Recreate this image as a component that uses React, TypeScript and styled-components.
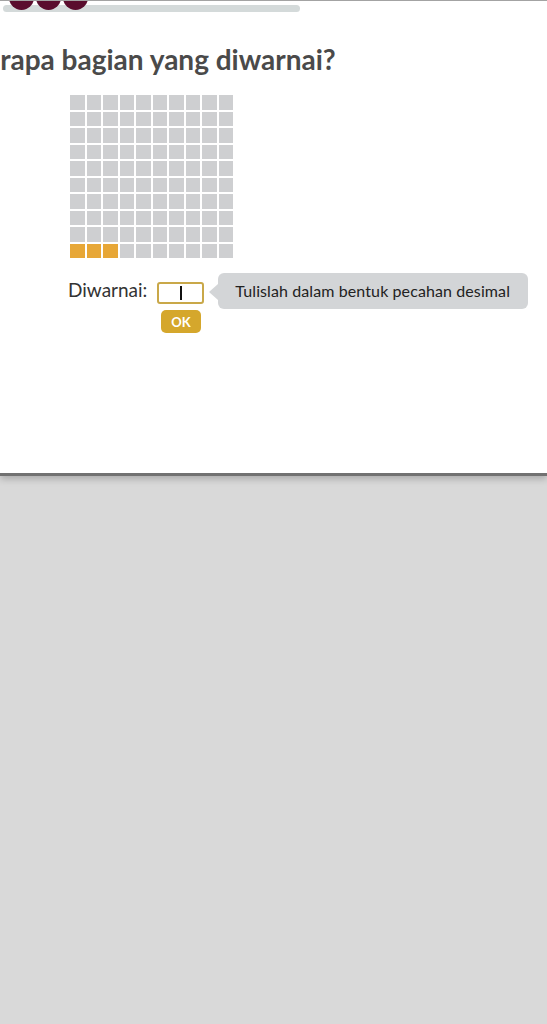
import styled, { createGlobalStyle } from "styled-components";

const GlobalStyle = createGlobalStyle`
  html, body {
    margin: 0;
    padding: 0;
    background: #d9d9d9;
  }
  body {
    font-family: Lato, "Noto Sans", sans-serif;
  }
`;

const Screen = styled.div`
  min-height: 1024px;
  background: #d9d9d9;
  overflow: hidden;
`;

const Sheet = styled.section`
  position: relative;
  height: 476px;
  box-sizing: border-box;
  background: #fff;
  border-top: 1px solid #a3a3a3;
  border-bottom: 3px solid #717171;
  box-shadow: 0 3px 7px rgba(0, 0, 0, 0.22);
  overflow: hidden;
`;

const Header = styled.header`
  position: relative;
  padding-top: 4px;
`;

const Progress = styled.div`
  margin-left: 3px;
  width: 297px;
  height: 7px;
  border-radius: 4px;
  background: #d4dada;
`;

const Dots = styled.div`
  position: absolute;
  top: -16px;
  left: 9px;
  display: flex;
  gap: 2px;
`;

const Dot = styled.span`
  width: 25px;
  height: 25px;
  border-radius: 50%;
  background: #5a0d2e;
`;

const Title = styled.h1`
  margin: 30px 0 0 -33px;
  font-size: 28px;
  line-height: 34px;
  font-weight: 700;
  color: #4a4a4a;
  white-space: nowrap;
`;

const Grid = styled.div`
  margin: 19px 0 0 70px;
  display: grid;
  grid-template-columns: repeat(10, 14.5px);
  grid-auto-rows: 14.5px;
  gap: 2px;
`;

const Cell = styled.span<{ $on: boolean }>`
  background: ${(p) => (p.$on ? "#e7a737" : "#cecfd1")};
`;

const AnswerRow = styled.div`
  margin: 15px 0 0 68px;
  display: flex;
  align-items: flex-start;
`;

const Label = styled.span`
  margin-top: 6px;
  font-size: 19px;
  line-height: 22px;
  color: #333;
`;

const InputStack = styled.div`
  margin-left: 10px;
  display: flex;
  flex-direction: column;
  align-items: center;
`;

const Field = styled.div`
  margin-top: 9px;
  width: 47px;
  height: 22px;
  box-sizing: border-box;
  border: 2px solid #c9a849;
  border-radius: 3px;
  display: flex;
  align-items: center;
  justify-content: center;
`;

const Caret = styled.span`
  width: 2px;
  height: 14px;
  background: #111;
`;

const OkButton = styled.button`
  margin-top: 6px;
  width: 40px;
  height: 23px;
  padding: 0;
  border: none;
  border-radius: 5px;
  background: #d5a72c;
  color: #fff;
  font-family: Lato, "Noto Sans", sans-serif;
  font-size: 13px;
  font-weight: 700;
`;

const Hint = styled.div`
  position: relative;
  margin-left: 14px;
  width: 310px;
  height: 36px;
  box-sizing: border-box;
  padding-left: 17px;
  border-radius: 6px;
  background: #d3d5d7;
  color: #222;
  font-size: 16px;
  letter-spacing: 0.1px;
  line-height: 36px;
  white-space: nowrap;
  &::before {
    content: "";
    position: absolute;
    left: -9px;
    top: 11px;
    border-top: 8px solid transparent;
    border-bottom: 8px solid transparent;
    border-right: 9px solid #d3d5d7;
  }
`;

const cells = Array.from({ length: 100 }, (_, i) => i >= 90 && i < 93);

export default function App() {
  return (
    <Screen>
      <GlobalStyle />
      <Sheet>
        <Header>
          <Progress />
          <Dots>
            <Dot />
            <Dot />
            <Dot />
          </Dots>
        </Header>
        <Title>Berapa bagian yang diwarnai?</Title>
        <Grid>
          {cells.map((on, i) => (
            <Cell key={i} $on={on} />
          ))}
        </Grid>
        <AnswerRow>
          <Label>Diwarnai:</Label>
          <InputStack>
            <Field>
              <Caret />
            </Field>
            <OkButton>OK</OkButton>
          </InputStack>
          <Hint>Tulislah dalam bentuk pecahan desimal</Hint>
        </AnswerRow>
      </Sheet>
    </Screen>
  );
}
